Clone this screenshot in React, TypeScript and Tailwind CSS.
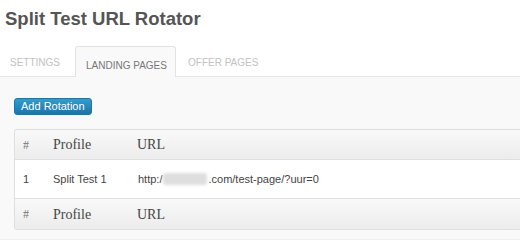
import { Fragment } from "react";

const tabs = [
  { label: "SETTINGS", active: false },
  { label: "LANDING PAGES", active: true },
  { label: "OFFER PAGES", active: false },
];

const HeadRow = ({ last }: { last?: boolean }) => (
  <div
    className={`flex items-center h-[30px] bg-gradient-to-b from-[#f9f9f9] to-[#ececec] text-[#464646] text-[14px] ${
      last ? "" : "border-b border-[#dfdfdf]"
    }`}
    style={{ fontFamily: '"Liberation Serif", Georgia, serif' }}
  >
    <span className="w-[38px] pl-[8px] text-[12px] text-[#777]">#</span>
    <span className="w-[84px]">Profile</span>
    <span>URL</span>
  </div>
);

export default function App() {
  return (
    <div
      className="w-[520px] h-[245px] bg-white overflow-hidden"
      style={{ fontFamily: '"Liberation Sans", Arial, sans-serif' }}
    >
      <h1 className="pl-[5px] pt-[6px] text-[18.5px] font-bold text-[#555] leading-[26px]">
        Split Test URL Rotator
      </h1>

      <div className="mt-[15px] flex items-end h-[30px] border-b border-[#e6e6e6] pl-[10px]">
        {tabs.map((t) => (
          <Fragment key={t.label}>
            {t.active ? (
              <div className="h-[31px] -mb-px w-[101px] pl-[10px] pt-[11px] ml-[15px] mr-[12px] border border-b-0 border-[#e2e2e2] rounded-t-[3px] bg-[#f9f9f9] text-[10px] text-[#777]">
                {t.label}
              </div>
            ) : (
              <div className="h-[30px] pt-[9px] text-[10px] text-[#c2c2c2]">
                {t.label}
              </div>
            )}
          </Fragment>
        ))}
      </div>

      <div className="bg-[#f9f9f9] pl-[14px] pt-[21px] pb-[9px] border-b border-[#f0f0f0]">
        <button className="block h-[17px] px-[6px] rounded-[3px] bg-gradient-to-b from-[#2e9fd2] to-[#1e74a8] border border-[#21759b] text-white text-[11px] leading-[15px]">
          Add Rotation
        </button>

        <div className="mt-[14px] border border-r-0 border-[#dfdfdf] rounded-l-[3px] overflow-hidden">
          <HeadRow />
          <div className="flex items-center h-[39px] bg-white border-b border-[#dfdfdf] text-[11px] text-[#444]">
            <span className="w-[38px] pl-[8px]">1</span>
            <span className="w-[85px]">Split Test 1</span>
            <span className="flex items-center">
              http:/
              <span className="inline-block w-[44px] h-[12px] bg-[#dedede] rounded-[3px] blur-[1.5px] mx-[1px]" />
              .com/test-page/?uur=0
            </span>
          </div>
          <HeadRow last />
        </div>
      </div>
    </div>
  );
}
